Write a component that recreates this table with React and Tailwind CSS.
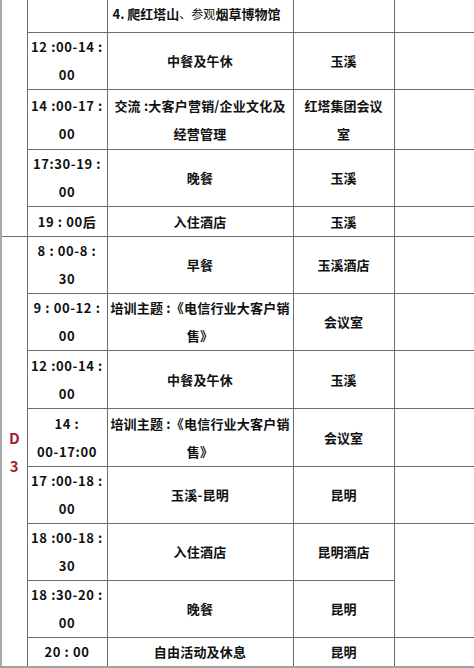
import React from "react";

// 行程表 (D3 部分)
const rows = [
  { h: "h-[32px]", time: [], act: "first", loc: [] },
  { h: "h-[57px]", time: ["12 :00-14 :", "00"], act: ["中餐及午休"], loc: ["玉溪"] },
  { h: "h-[60px]", time: ["14 :00-17 :", "00"], act: ["交流 :大客户营销/企业文化及", "经营管理"], loc: ["红塔集团会议", "室"] },
  { h: "h-[57px]", time: ["17:30-19 :", "00"], act: ["晚餐"], loc: ["玉溪"] },
  { h: "h-[30px]", time: ["19 : 00后"], act: ["入住酒店"], loc: ["玉溪"] },
  { h: "h-[57px]", time: ["8 : 00-8 :", "30"], act: ["早餐"], loc: ["玉溪酒店"] },
  { h: "h-[57px]", time: ["9 : 00-12 :", "00"], act: ["培训主题 :《电信行业大客户销", "售》"], loc: ["会议室"] },
  { h: "h-[58px]", time: ["12 :00-14 :", "00"], act: ["中餐及午休"], loc: ["玉溪"] },
  { h: "h-[58px]", time: ["14 :", "00-17:00"], act: ["培训主题 :《电信行业大客户销", "售》"], loc: ["会议室"] },
  { h: "h-[57px]", time: ["17 :00-18 :", "00"], act: ["玉溪-昆明"], loc: ["昆明"] },
  { h: "h-[57px]", time: ["18 :00-18 :", "30"], act: ["入住酒店"], loc: ["昆明酒店"], lastSpan: 2 },
  { h: "h-[57px]", time: ["18 :30-20 :", "00"], act: ["晚餐"], loc: ["昆明"], skipLast: true },
  { h: "h-[28px]", time: ["20 : 00"], act: ["自由活动及休息"], loc: ["昆明"], bottom: true },
];

const Lines = ({ items }) => (
  <>
    {items.map((t, i) => (
      <div key={i}>{t}</div>
    ))}
  </>
);

export default function App() {
  return (
    <div className="w-[474px] h-[668px] overflow-hidden bg-white text-[#111] font-['Noto_Sans_CJK_SC','Liberation_Sans',sans-serif]">
      <table className="table-fixed border-collapse w-[474px] text-[13px] leading-[28px] font-bold">
        <colgroup>
          <col className="w-[26px]" />
          <col className="w-[80px]" />
          <col className="w-[186px]" />
          <col className="w-[101px]" />
          <col className="w-[81px]" />
        </colgroup>
        <tbody>
          {rows.map((r, i) => {
            const edge = i === 0 ? "border-t-0" : "";
            const bot = r.bottom ? "border-b-2 border-b-[#a0a0a0]" : "";
            return (
              <tr key={i} className={r.h}>
                {i === 0 && (
                  <td rowSpan={5} className="border border-[#6e6e6e] border-t-0 border-l-2 border-l-[#a8a8a8]" />
                )}
                {i === 5 && (
                  <td
                    rowSpan={8}
                    className="border border-[#6e6e6e] border-l-2 border-l-[#a8a8a8] border-b-2 border-b-[#a0a0a0] text-center align-middle text-[15px] text-[#a3222f]"
                  >
                    <div>D</div>
                    <div>3</div>
                  </td>
                )}
                <td className={`border border-[#6e6e6e] ${edge} ${bot} text-center align-middle p-0 tracking-[0.6px] whitespace-nowrap`}>
                  <Lines items={r.time} />
                </td>
                {r.act === "first" ? (
                  <td className="border border-[#6e6e6e] border-t-0 text-left align-middle pl-[5px] pb-[4px] whitespace-nowrap">
                    4. 爬红塔山<span className="font-normal text-[12px]">、参观</span>烟草博物馆
                  </td>
                ) : (
                  <td className={`border border-[#6e6e6e] ${edge} ${bot} text-center align-middle p-0 whitespace-nowrap tracking-[0.2px]`}>
                    <Lines items={r.act} />
                  </td>
                )}
                <td className={`border border-[#6e6e6e] ${edge} ${bot} text-center align-middle p-0`}>
                  <Lines items={r.loc} />
                </td>
                {!r.skipLast && (
                  <td
                    rowSpan={r.lastSpan || 1}
                    className={`border border-[#6e6e6e] border-r-0 ${edge} ${bot}`}
                  />
                )}
              </tr>
            );
          })}
        </tbody>
      </table>
      <div className="h-[4px] bg-[#d6d6d6]" />
    </div>
  );
}
